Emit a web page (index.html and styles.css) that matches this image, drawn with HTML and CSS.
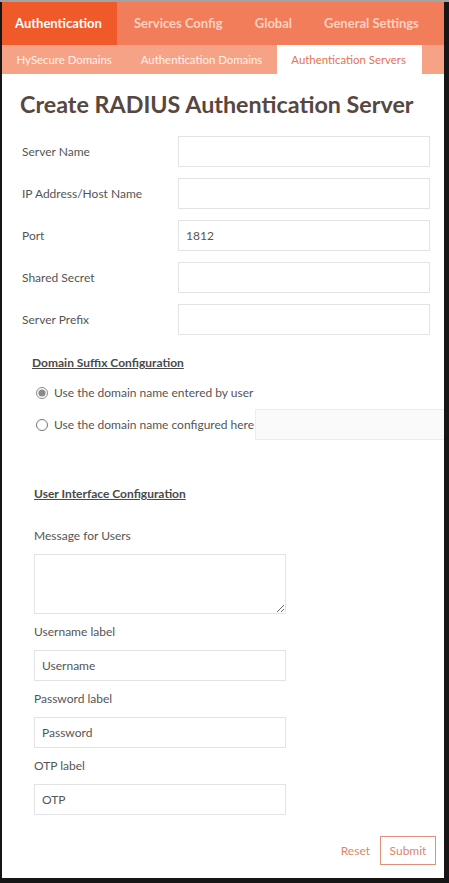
FILE: index.html
```html
<!DOCTYPE html>
<html lang="en">

<head>
    <meta charset="UTF-8">
    <meta name="viewport" content="width=device-width, initial-scale=1.0">
    <title>Create RADIUS Authentication Server</title>
    <link rel="stylesheet" href="styles.css">
</head>

<body>
    <div class="page">
        <ul class="main-nav">
            <li class="active">Authentication</li>
            <li>Services Config</li>
            <li>Global</li>
            <li>General Settings</li>
        </ul>
        <ul class="sub-nav">
            <li>HySecure Domains</li>
            <li>Authentication Domains</li>
            <li class="active">Authentication Servers</li>
        </ul>

        <div class="content">
            <h1>Create RADIUS Authentication Server</h1>

            <div class="row">
                <label>Server Name</label>
                <input type="text">
            </div>
            <div class="row">
                <label>IP Address/Host Name</label>
                <input type="text">
            </div>
            <div class="row">
                <label>Port</label>
                <input type="text" value="1812">
            </div>
            <div class="row">
                <label>Shared Secret</label>
                <input type="password">
            </div>
            <div class="row">
                <label>Server Prefix</label>
                <input type="text">
            </div>

            <div class="section suffix">
                <h3>Domain Suffix Configuration</h3>
                <label class="radio"><input type="radio" name="suffix" checked> Use the domain name entered by user</label>
                <label class="radio"><input type="radio" name="suffix"> Use the domain name configured here <input type="text" class="suffix-input"></label>
            </div>

            <div class="section ui-config">
                <h3>User Interface Configuration</h3>
                <label class="field-label msg-label">Message for Users</label>
                <textarea></textarea>
                <label class="field-label">Username label</label>
                <input type="text" value="Username">
                <label class="field-label">Password label</label>
                <input type="text" value="Password">
                <label class="field-label">OTP label</label>
                <input type="text" value="OTP">
            </div>

            <div class="actions">
                <button class="reset">Reset</button>
                <button class="submit">Submit</button>
            </div>
        </div>
    </div>
</body>

</html>
```

FILE: styles.css
```css
*{
    margin: 0;
    padding: 0;
    box-sizing: border-box;
}
body{
    background-color: #161616;
    border-top: 2px solid #a3a3a3;
    font-family: Lato, "Open Sans", sans-serif;
    color: #555;
    height: 100vh;
}
.page{
    background-color: white;
    margin: 0 5px 0 2px;
    height: calc(100vh - 7px);
    overflow: hidden;
}

/* top tabs */
.main-nav{
    list-style: none;
    display: flex;
    background-color: #f27d5b;
    height: 43px;
    white-space: nowrap;
}
.main-nav li{
    padding: 0 15px 0 17px;
    line-height: 43px;
    font-size: 13px;
    font-weight: bold;
    color: #fcd2c2;
}
.main-nav li:first-child{
    padding-left: 13px;
}
.main-nav li.active{
    background-color: #f05a2a;
    color: white;
}
.sub-nav{
    list-style: none;
    display: flex;
    background-color: #f6a286;
    height: 29px;
    white-space: nowrap;
}
.sub-nav li{
    padding: 0 14.5px;
    line-height: 29px;
    font-size: 11.4px;
    color: #fff3ee;
}
.sub-nav li.active{
    background-color: white;
    color: #e7714f;
    padding-right: 16px;
}

.content{
    padding: 0 14px 0 20px;
}
h1{
    font-size: 23.3px;
    color: #574741;
    margin: 16px 0 18px -2px;
    white-space: nowrap;
}

.row{
    display: flex;
    align-items: center;
    margin-bottom: 11px;
}
.row label{
    width: 156px;
    font-size: 12px;
}
input[type=text], input[type=password], textarea{
    border: 1px solid #e3e3e3;
    height: 31px;
    font-family: inherit;
    font-size: 12px;
    color: #555;
    padding: 0 7px;
    outline: none;
}
.row input{
    width: 252px;
}

.section h3{
    font-size: 12px;
    font-weight: bold;
    color: #4a4a4a;
    text-decoration: underline;
    line-height: 16px;
}
.suffix{
    padding-left: 10px;
    margin-top: 20px;
}
.radio{
    display: flex;
    align-items: center;
    font-size: 12px;
    margin-left: 5px;
    white-space: nowrap;
}
.radio input[type=radio]{
    width: 12px;
    height: 12px;
    margin-right: 6px;
    margin-left: -1px;
    accent-color: #8a8a8a;
}
.suffix h3{
    margin-bottom: 14px;
}
.suffix .radio:nth-of-type(1){
    margin-bottom: 9px;
}
.suffix-input{
    flex: 1;
    margin-left: 1px;
    margin-right: -20px;
    background-color: #fafafa;
    border-color: #ececec !important;
}

.ui-config{
    padding-left: 12px;
    margin-top: 46px;
    display: flex;
    flex-direction: column;
    align-items: flex-start;
}
.field-label{
    font-size: 12px;
    line-height: 16px;
    margin: 10px 0 10px;
}
.msg-label{
    margin-top: 26px;
}
.ui-config input, .ui-config textarea{
    width: 252px;
}
.ui-config textarea{
    height: 60px;
    resize: vertical;
}

.actions{
    display: flex;
    justify-content: flex-end;
    align-items: center;
    margin-top: 21px;
    margin-right: -6px;
}
button{
    font-family: inherit;
    font-size: 12px;
    color: #e0846a;
    background: none;
    border: none;
    cursor: pointer;
}
.reset{
    margin-right: 10px;
}
.submit{
    border: 1px solid #e0907a;
    width: 56px;
    height: 29px;
}
```
